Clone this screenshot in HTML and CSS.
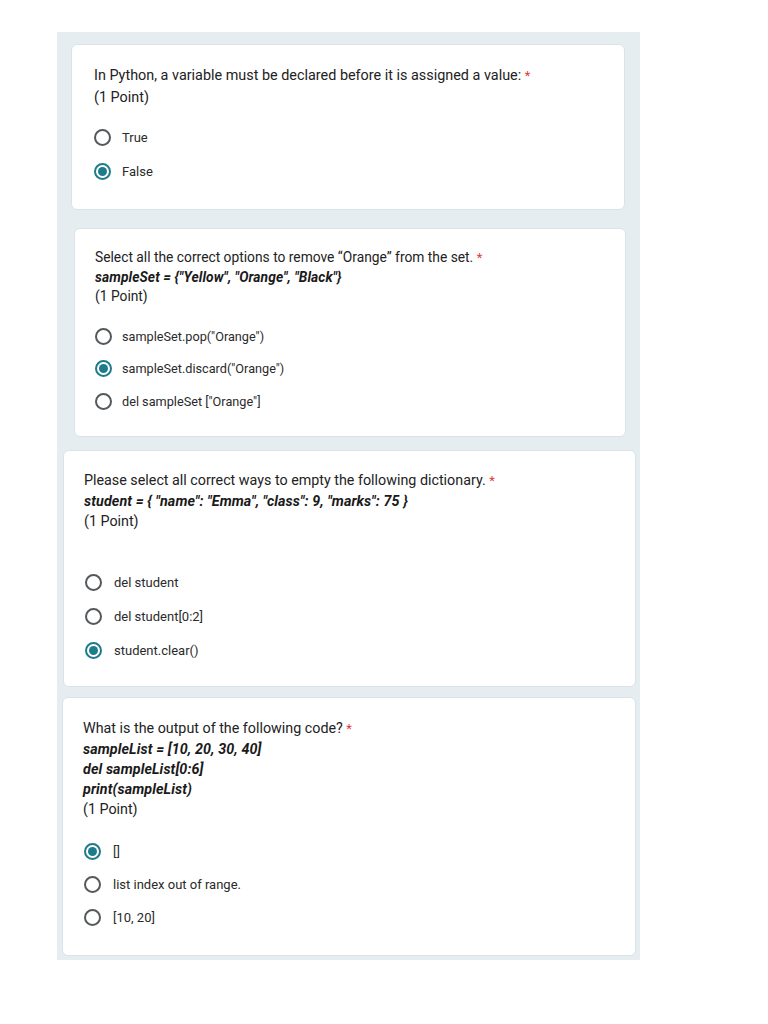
FILE: index.html
```html
<!DOCTYPE html>
<html lang="en">
<head>
<meta charset="utf-8">
<title>Python Quiz</title>
<link rel="stylesheet" href="styles.css">
</head>
<body>
<main class="panel">
  <section class="card card--q1">
    <div class="question">
      <p class="q-title">In Python, a variable must be declared before it is assigned a value: <span class="req">*</span></p>
      <p class="q-points">(1 Point)</p>
    </div>
    <ul class="options">
      <li class="option"><span class="radio"></span><span class="label">True</span></li>
      <li class="option"><span class="radio radio--on"></span><span class="label">False</span></li>
    </ul>
  </section>

  <section class="card card--q2">
    <div class="question">
      <p class="q-title">Select all the correct options to remove “Orange” from the set. <span class="req">*</span></p>
      <p class="q-code">sampleSet = {"Yellow", "Orange", "Black"}</p>
      <p class="q-points">(1 Point)</p>
    </div>
    <ul class="options">
      <li class="option"><span class="radio"></span><span class="label">sampleSet.pop("Orange")</span></li>
      <li class="option"><span class="radio radio--on"></span><span class="label">sampleSet.discard("Orange")</span></li>
      <li class="option"><span class="radio"></span><span class="label">del sampleSet ["Orange"]</span></li>
    </ul>
  </section>

  <section class="card card--q3">
    <div class="question">
      <p class="q-title">Please select all correct ways to empty the following dictionary. <span class="req">*</span></p>
      <p class="q-code">student = { "name": "Emma", "class": 9, "marks": 75 }</p>
      <p class="q-points">(1 Point)</p>
    </div>
    <ul class="options">
      <li class="option"><span class="radio"></span><span class="label">del student</span></li>
      <li class="option"><span class="radio"></span><span class="label">del student[0:2]</span></li>
      <li class="option"><span class="radio radio--on"></span><span class="label">student.clear()</span></li>
    </ul>
  </section>

  <section class="card card--q4">
    <div class="question">
      <p class="q-title">What is the output of the following code? <span class="req">*</span></p>
      <p class="q-code">sampleList = [10, 20, 30, 40]</p>
      <p class="q-code">del sampleList[0:6]</p>
      <p class="q-code">print(sampleList)</p>
      <p class="q-points">(1 Point)</p>
    </div>
    <ul class="options">
      <li class="option"><span class="radio radio--on"></span><span class="label">[]</span></li>
      <li class="option"><span class="radio"></span><span class="label">list index out of range.</span></li>
      <li class="option"><span class="radio"></span><span class="label">[10, 20]</span></li>
    </ul>
  </section>
</main>
</body>
</html>
```

FILE: styles.css
```css
* { box-sizing: border-box; }

html, body {
  margin: 0;
  padding: 0;
  background: #ffffff;
}

body {
  font-family: Roboto, "Liberation Sans", Arial, sans-serif;
  color: #222222;
}

.panel {
  width: 583px;
  margin: 32px 0 0 57px;
  padding: 12px 0 4px;
  background: #e6edf0;
  display: flex;
  flex-direction: column;
}

.card {
  background: #ffffff;
  border: 1px solid #d9e3e8;
  border-radius: 6px;
  padding: 20px 20px 0 22px;
}

.card--q1 { margin: 0 15px 0 14px; height: 166px; padding-top: 20px; }
.card--q2 { margin: 18px 14px 0 17px; height: 209px; padding-top: 19px; padding-left: 20px; }
.card--q3 { margin: 13px 4px 0 6px; height: 237px; padding-left: 20px; padding-top: 19px; }
.card--q4 { margin: 10px 4px 0 5px; height: 259px; padding-left: 20px; }

.question p {
  margin: 0;
  font-size: 14.4px;
  line-height: 22px;
}

.card--q2 .question p { font-size: 13.8px; line-height: 19.5px; }
.card--q3 .question p { font-size: 14.3px; line-height: 20px; }
.card--q4 .question p { font-size: 14.3px; line-height: 20px; }

.req {
  color: #e53935;
  font-size: 13px;
}

.q-code {
  font-weight: 700;
  font-style: italic;
  letter-spacing: 0.1px;
  color: #1a1a1a;
}

.options {
  list-style: none;
  margin: 0;
  padding: 0;
  display: flex;
  flex-direction: column;
}

.card--q1 .options { margin-top: 20px; gap: 17px; }
.card--q2 .options { margin-top: 21px; gap: 15.5px; }
.card--q3 .options { margin-top: 43px; gap: 17px; }
.card--q4 .options { margin-top: 24px; gap: 16px; }

.option {
  display: flex;
  align-items: center;
  height: 17px;
  font-size: 13px;
  color: #2a2a2a;
}

.card--q2 .option { font-size: 12.7px; }

.radio {
  width: 17px;
  height: 17px;
  border: 2px solid #55595c;
  border-radius: 50%;
  flex: none;
  margin-right: 11px;
  display: flex;
  align-items: center;
  justify-content: center;
}

.card--q2 .radio { margin-right: 10px; }
.card--q3 .radio, .card--q4 .radio { margin-left: 1px; margin-right: 12px; }

.radio--on {
  border-color: #1e7b8a;
}

.radio--on::after {
  content: "";
  width: 9px;
  height: 9px;
  border-radius: 50%;
  background: #1e7b8a;
}
```
